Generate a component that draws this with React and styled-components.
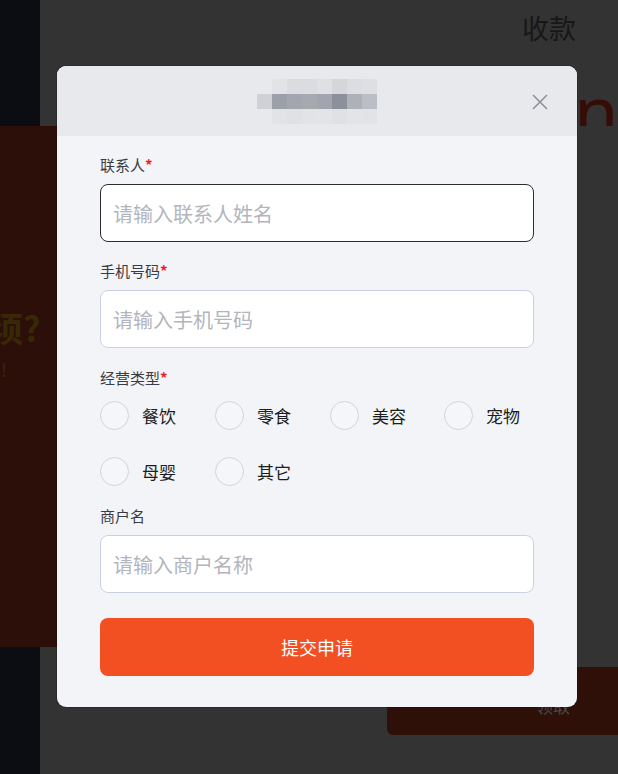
import styled, { createGlobalStyle } from 'styled-components';

const GlobalStyle = createGlobalStyle`
    html, body {
        margin: 0;
        padding: 0;
        background: #333333;
    }
    * {
        box-sizing: border-box;
    }
    body {
        font-family: "Noto Sans CJK SC", "Noto Sans", sans-serif;
    }
`;

const Page = styled.div`
    position: relative;
    width: 618px;
    height: 774px;
    overflow: hidden;
    display: flex;
    flex-direction: column;
    background: #333333;
`;

const Band = styled.div`
    display: flex;
    height: ${p => p.h}px;
    flex-shrink: 0;
`;

const Side = styled.div`
    width: 40px;
    flex-shrink: 0;
    background: #0b0d12;
`;

const TopMain = styled.div`
    flex: 1;
    display: flex;
    flex-direction: column;
    align-items: flex-end;
    padding: 10px 42px 0 0;
`;

const PayText = styled.div`
    font-size: 27px;
    color: #171717;
    line-height: 36px;
`;

// the big letter peeking out behind the dialog, right edge of the page
const BigLetter = styled.div`
    margin: 28px -44px 0 0;
    width: 46px;
    height: 54px;
    overflow: hidden;
    font-family: "Noto Sans", sans-serif;
    font-size: 72px;
    line-height: 72px;
    color: #360c06;
`;

const Banner = styled.div`
    width: 420px;
    background: #2d0f0a;
    display: flex;
    flex-direction: column;
    padding-top: 180px;
    overflow: hidden;
`;

const BannerTitle = styled.div`
    margin-left: -11px;
    font-size: 34px;
    font-weight: 700;
    color: #372905;
    line-height: 44px;
    white-space: nowrap;
`;

const BannerMark = styled.div`
    margin: 8px 0 0 1px;
    font-size: 18px;
    color: #372905;
    line-height: 22px;
`;

const BottomMain = styled.div`
    flex: 1;
    display: flex;
    justify-content: flex-end;
    padding-top: 20px;
`;

const ClaimBox = styled.div`
    width: 231px;
    height: 68px;
    border-radius: 6px 0 0 6px;
    background: #2e1008;
    display: flex;
    justify-content: flex-end;
    padding: 29px 48px 0 0;
    font-size: 17px;
    line-height: 20px;
    color: #4a4a4a;
`;

const Modal = styled.div`
    position: absolute;
    left: 57px;
    top: 66px;
    width: 520px;
    border-radius: 9px;
    overflow: hidden;
    background: #f3f4f8;
    box-shadow: 0 0 0 1px rgba(0, 0, 0, 0.15);
`;

const Header = styled.div`
    height: 70px;
    background: #e8e9ec;
    display: flex;
    align-items: center;
    justify-content: center;
    position: relative;
`;

const Close = styled.button`
    position: absolute;
    right: 28px;
    top: 27px;
    width: 18px;
    height: 18px;
    padding: 0;
    border: none;
    background: none;
    display: flex;
    align-items: center;
    justify-content: center;
`;

const Body = styled.div`
    padding: 18px 43px 31px;
    display: flex;
    flex-direction: column;
`;

const Field = styled.div`
    display: flex;
    flex-direction: column;
    gap: 8px;
    margin-bottom: ${p => p.mb || 18}px;
`;

const Label = styled.div`
    font-size: 15px;
    line-height: 22px;
    height: 22px;
    color: #393c45;
`;

const Star = styled.span`
    color: #f01d1d;
    font-weight: 700;
`;

const Input = styled.input`
    height: 58px;
    width: 100%;
    border: 1px solid ${p => (p.active ? '#2d2d2f' : '#c9d1e0')};
    border-radius: 8px;
    background: #ffffff;
    padding: 0 12px;
    font-family: inherit;
    font-size: 20px;
    color: #222;
    outline: none;

    &::placeholder {
        color: #b3b5bb;
    }
`;

const RadioGrid = styled.div`
    display: grid;
    grid-template-columns: 115px 115px 114px auto;
    row-gap: 27px;
    margin-top: 4px;
`;

const RadioItem = styled.label`
    display: flex;
    align-items: center;
    gap: 13px;
    height: 29px;
    font-size: 17px;
    color: #1c1c1c;
`;

const Circle = styled.span`
    width: 29px;
    height: 29px;
    border-radius: 50%;
    border: 1.5px solid #d3d4d8;
    background: #f5f6f9;
    flex-shrink: 0;
`;

const Submit = styled.button`
    margin-top: 7px;
    height: 58px;
    border: none;
    border-radius: 8px;
    background: #f24f23;
    color: #ffffff;
    font-family: inherit;
    font-size: 18px;
`;

const mosaic = [
    ['', '#e2e3e7', '#dadce0', '#dadce0', '#dfe0e4', '#d4d6da', '#dcdde1', '#dedfe3'],
    ['#cfd1d6', '#9ba0a9', '#a3a6ae', '#a6a9b0', '#a2a5ad', '#8c909a', '#aeb1b8', '#bcbec5'],
    ['', '#e2e3e6', '#e0e1e5', '#e1e3e5', '#e3e4e7', '#e0e1e5', '#e3e4e6', '#e2e3e6'],
];

function TitleMosaic() {
    return (
        <svg width="120" height="45" viewBox="0 0 120 45">
            {mosaic.map((row, r) =>
                row.map((c, i) =>
                    c ? <rect key={r + '-' + i} x={i * 15} y={r * 15} width="15" height="15" fill={c} /> : null
                )
            )}
        </svg>
    );
}

const types = ['餐饮', '零食', '美容', '宠物', '母婴', '其它'];

function App() {
    return (
        <>
            <GlobalStyle />
            <Page>
                <Band h={126}>
                    <Side />
                    <TopMain>
                        <PayText>收款</PayText>
                        <BigLetter>n</BigLetter>
                    </TopMain>
                </Band>
                <Band h={521}>
                    <Banner>
                        <BannerTitle>须?</BannerTitle>
                        <BannerMark>!</BannerMark>
                    </Banner>
                </Band>
                <Band h={127}>
                    <Side />
                    <BottomMain>
                        <ClaimBox>领取</ClaimBox>
                    </BottomMain>
                </Band>

                <Modal>
                    <Header>
                        <TitleMosaic />
                        <Close>
                            <svg width="18" height="18" viewBox="0 0 18 18">
                                <path d="M2 2 L16 16 M16 2 L2 16" stroke="#8b8e96" strokeWidth="1.5" />
                            </svg>
                        </Close>
                    </Header>
                    <Body>
                        <Field>
                            <Label>联系人<Star>*</Star></Label>
                            <Input active placeholder="请输入联系人姓名" />
                        </Field>
                        <Field mb={19}>
                            <Label>手机号码<Star>*</Star></Label>
                            <Input placeholder="请输入手机号码" />
                        </Field>
                        <Field mb={19}>
                            <Label>经营类型<Star>*</Star></Label>
                            <RadioGrid>
                                {types.map(t => (
                                    <RadioItem key={t}>
                                        <Circle />
                                        {t}
                                    </RadioItem>
                                ))}
                            </RadioGrid>
                        </Field>
                        <Field>
                            <Label>商户名</Label>
                            <Input placeholder="请输入商户名称" />
                        </Field>
                        <Submit>提交申请</Submit>
                    </Body>
                </Modal>
            </Page>
        </>
    );
}

export default App
